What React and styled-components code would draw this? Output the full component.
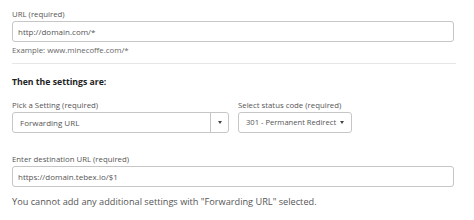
import React from 'react';
import styled, { createGlobalStyle } from 'styled-components';

const GlobalStyle = createGlobalStyle`
    html, body {
        margin: 0;
        padding: 0;
        background: #ffffff;
    }
    body {
        font-family: "Open Sans", "Noto Sans", sans-serif;
        color: #555555;
    }
`;

const Page = styled.div`
    width: 444px;
    padding: 8px 18px 0 12px;
`;

const Label = styled.label`
    display: block;
    font-size: 7.8px;
    line-height: 12px;
    color: #555555;
    margin-bottom: 1px;
`;

const TextBox = styled.div`
    box-sizing: border-box;
    height: 21px;
    width: 442px;
    border: 1px solid #c6c6c6;
    border-radius: 3px;
    padding: 0 5px;
    display: flex;
    align-items: center;
    font-size: 8px;
    color: #555555;
    background: #fff;
`;

const Hint = styled.div`
    font-size: 7.8px;
    line-height: 12px;
    margin-top: 1.5px;
    color: #666666;
`;

const Divider = styled.hr`
    border: 0;
    border-top: 1px solid #e6e6e6;
    margin: 7.5px 0 0;
    width: 444px;
`;

const Heading = styled.h3`
    font-size: 8.7px;
    line-height: 12px;
    font-weight: 700;
    color: #222222;
    margin: 11.5px 0 0;
`;

const Row = styled.div`
    display: flex;
    gap: 9px;
    margin-top: ${p => p.top || '0'};
`;

const Field = styled.div`
    display: flex;
    flex-direction: column;
    margin-top: ${p => p.top || '0'};
`;

const Select = styled.div`
    box-sizing: border-box;
    height: 21px;
    width: ${p => p.width};
    border: 1px solid #c6c6c6;
    border-radius: 3px;
    display: flex;
    align-items: center;
    font-size: ${p => p.size || '8px'};
    color: #555555;
    background: #fff;
`;

const SelectText = styled.span`
    flex: 1;
    padding-left: ${p => p.left || '7px'};
    white-space: nowrap;
`;

const ArrowCell = styled.span`
    align-self: stretch;
    width: 17px;
    border-left: 1px solid #c6c6c6;
    display: flex;
    align-items: center;
    justify-content: center;
`;

const Caret = styled.span`
    flex-shrink: 0;
    width: 0;
    height: 0;
    border-left: 2px solid transparent;
    border-right: 2px solid transparent;
    border-top: 3px solid #444;
    margin-right: ${p => p.right || '0'};
`;

const Note = styled.p`
    font-size: 9.2px;
    line-height: 14px;
    color: #555555;
    margin: 8px 0 0;
`;

export default function App() {
    return (
        <Page>
            <GlobalStyle />
            <Field>
                <Label>URL (required)</Label>
                <TextBox>http://domain.com/*</TextBox>
                <Hint>Example: www.minecoffe.com/*</Hint>
            </Field>
            <Divider />
            <Heading>Then the settings are:</Heading>
            <Row top="11px">
                <Field>
                    <Label>Pick a Setting (required)</Label>
                    <Select width="217px">
                        <SelectText>Forwarding URL</SelectText>
                        <ArrowCell><Caret /></ArrowCell>
                    </Select>
                </Field>
                <Field>
                    <Label>Select status code (required)</Label>
                    <Select width="114px" size="7.6px">
                        <SelectText left="7px">301 - Permanent Redirect</SelectText>
                        <Caret right="7px" />
                    </Select>
                </Field>
            </Row>
            <Field top="20.5px">
                <Label>Enter destination URL (required)</Label>
                <TextBox>https://domain.tebex.io/$1</TextBox>
            </Field>
            <Note>You cannot add any additional settings with "Forwarding URL" selected.</Note>
        </Page>
    );
}
